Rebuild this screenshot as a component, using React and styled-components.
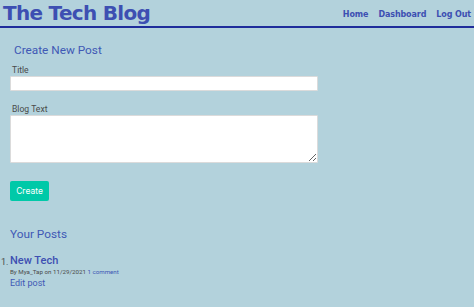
import React from "react";
import styled, { createGlobalStyle } from "styled-components";

const Global = createGlobalStyle`
  html, body { margin: 0; padding: 0; background: #b3d2dc; }
  body { font-family: "Roboto", "Liberation Sans", sans-serif; color: #4a4a4a; }
  * { box-sizing: border-box; }
`;

const Page = styled.div`
  width: 474px;
  min-height: 307px;
  background: #b3d2dc;
`;

const Header = styled.header`
  display: flex;
  align-items: center;
  justify-content: space-between;
  height: 28px;
  padding: 0 3px 0 3px;
  border-bottom: 2px solid #1f2d9b;
`;

const Brand = styled.h1`
  margin: 0;
  font-family: "DejaVu Sans", sans-serif;
  font-weight: 700;
  font-size: 20px;
  letter-spacing: -0.7px;
  color: #3d4fb2;
  line-height: 26px;
`;

const Nav = styled.nav`
  display: flex;
  gap: 10px;
  padding-top: 2px;
`;

const NavLink = styled.a`
  font-family: "DejaVu Sans", sans-serif;
  font-weight: 700;
  font-size: 8px;
  letter-spacing: -0.1px;
  color: #3d4fb2;
  text-decoration: none;
`;

const Main = styled.main`
  padding: 13px 10px 0 10px;
`;

const SectionTitle = styled.h2`
  margin: 0;
  padding-left: ${(p) => p.$indent || 0}px;
  font-weight: 400;
  font-size: 11.8px;
  line-height: 18px;
  color: #4058b5;
`;

const Form = styled.form`
  display: flex;
  flex-direction: column;
  margin-top: 6px;
`;

const Label = styled.label`
  display: block;
  font-size: 8.6px;
  line-height: 10px;
  color: #4a4a4a;
  padding-left: 2px;
  margin-bottom: 1px;
`;

const Field = styled.div`
  margin-bottom: ${(p) => p.$mb || 0}px;
`;

const Input = styled.input`
  display: block;
  width: 308px;
  height: 15px;
  border: 1px solid #dbdbdb;
  border-radius: 1px;
  background: #fff;
  padding: 0 4px;
`;

const TextArea = styled.textarea`
  display: block;
  width: 308px;
  height: 48px;
  border: 1px solid #dbdbdb;
  border-radius: 1px;
  background: #fff;
`;

const Button = styled.button`
  align-self: flex-start;
  width: 39px;
  height: 20px;
  border: none;
  border-radius: 2px;
  background: #00c9a8;
  color: #fff;
  font-family: "Inter", sans-serif;
  font-size: 8.5px;
  padding: 0;
`;

const PostsSection = styled.section`
  margin-top: 24px;
`;

const List = styled.ol`
  margin: 12px 0 0 0;
  padding-left: 0;
  list-style: none;
`;

const Item = styled.li`
  display: flex;
  margin-left: -9px;
`;

const Num = styled.span`
  width: 9px;
  font-size: 9px;
  line-height: 13px;
  padding-top: 1px;
  color: #4a4a4a;
`;

const PostBody = styled.div`
  display: flex;
  flex-direction: column;
`;

const PostTitle = styled.a`
  font-weight: 500;
  font-size: 11px;
  line-height: 12px;
  color: #3d4fb2;
  text-decoration: none;
`;

const Meta = styled.div`
  font-size: 6.2px;
  line-height: 10px;
  color: #4a4a4a;
`;

const MetaLink = styled.a`
  color: #4058b5;
  text-decoration: none;
`;

const EditLink = styled.a`
  font-size: 9px;
  line-height: 13px;
  color: #4058b5;
  text-decoration: none;
`;

export default function App() {
  return (
    <Page>
      <Global />
      <Header>
        <Brand>The Tech Blog</Brand>
        <Nav>
          <NavLink href="#">Home</NavLink>
          <NavLink href="#">Dashboard</NavLink>
          <NavLink href="#">Log Out</NavLink>
        </Nav>
      </Header>
      <Main>
        <SectionTitle $indent={4}>Create New Post</SectionTitle>
        <Form onSubmit={(e) => e.preventDefault()}>
          <Field $mb={13}>
            <Label>Title</Label>
            <Input type="text" />
          </Field>
          <Field $mb={18}>
            <Label>Blog Text</Label>
            <TextArea />
          </Field>
          <Button type="submit">Create</Button>
        </Form>
        <PostsSection>
          <SectionTitle>Your Posts</SectionTitle>
          <List>
            <Item>
              <Num>1.</Num>
              <PostBody>
                <PostTitle href="#">New Tech</PostTitle>
                <Meta>
                  By Mya_Tap on 11/29/2021{" "}
                  <MetaLink href="#">1 comment</MetaLink>
                </Meta>
                <EditLink href="#">Edit post</EditLink>
              </PostBody>
            </Item>
          </List>
        </PostsSection>
      </Main>
    </Page>
  );
}
